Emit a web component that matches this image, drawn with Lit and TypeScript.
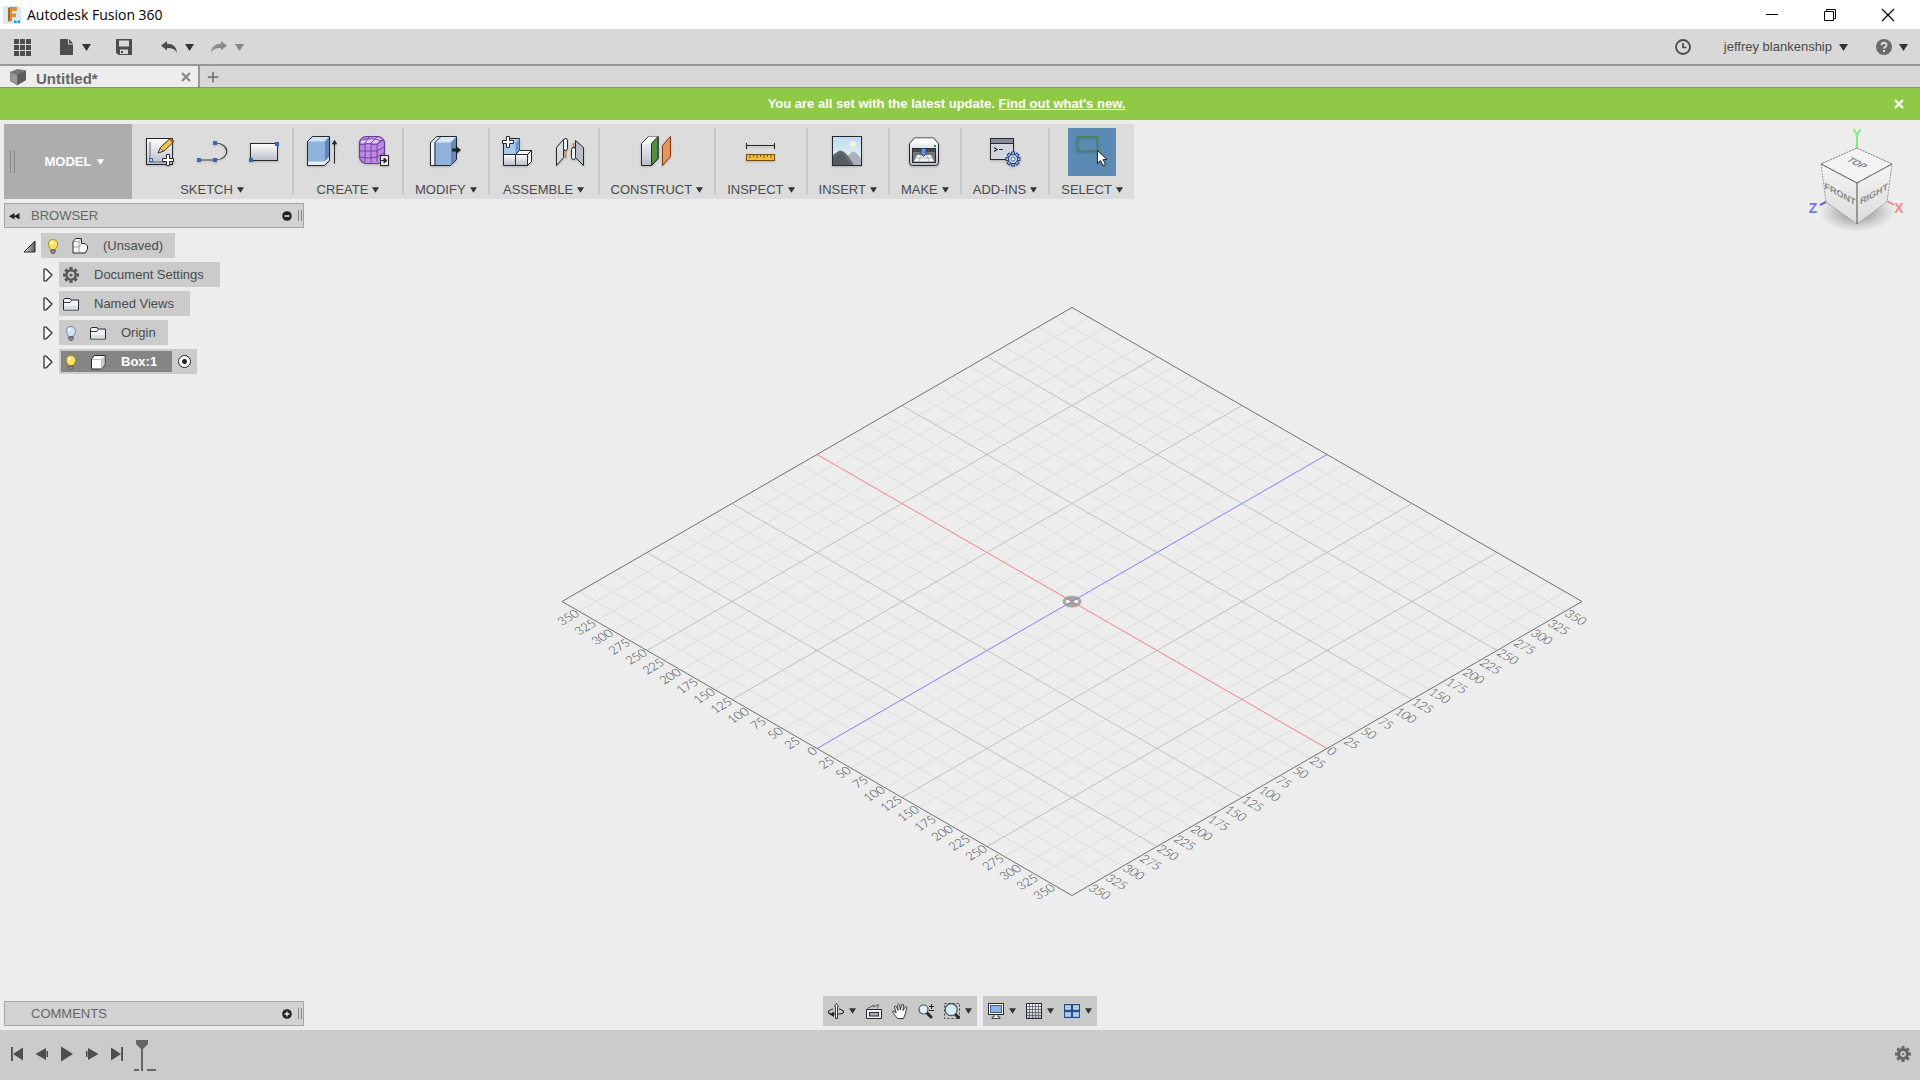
import { LitElement, html, svg, css, nothing } from "lit";
import type { TemplateResult, SVGTemplateResult } from "lit";
import { customElement } from "lit/decorators.js";
import { classMap } from "lit/directives/class-map.js";

const INK = "#26282c";

const gearTeeth = (cx: number, cy: number, r: number, w: number, fill: string, stroke = "none") =>
  [0, 45, 90, 135, 180, 225, 270, 315].map(
    (a) => svg`<rect x=${cx - w / 2} y=${cy - r} width=${w} height=${r / 2} fill=${fill} stroke=${stroke}
      transform="rotate(${a} ${cx} ${cy})"/>`
  );

/* Ribbon icons, drawn on a 48 unit cell */
const ribbonIcons: Record<string, SVGTemplateResult> = {
  createSketch: svg`
    <rect x="10.5" y="10.5" width="26" height="26" fill="url(#silver)" stroke=${INK}/>
    <path d="M14 14V34H34" fill="none" stroke="#666b78"/>
    <rect x="13.5" y="30.5" width="3" height="3" fill="#b9cdea" stroke="#3d63a8"/>
    <path d="M22 25l2.500-5.500L33.500 11l3.500 3.500L28 23z" fill="#f3c545" stroke="#3a2d14"/>
    <path d="M33.500 11l3.500 3.500 1-1.500-3-3z" fill="#b06a48" stroke="#5a3325" stroke-width=".6"/>
    <path d="M24.500 20.500l2.500 2.500-5 2z" fill="#f6e7c8" stroke="#3a2d14" stroke-width=".6"/>
    <path d="M30.500 26.500h3v4h4v3h-4v4h-3v-4h-4v-3h4z" fill="#fff" stroke=${INK}/>`,
  arc: svg`
    <path d="M11 32H28C43 31 42 15 27 15" fill="none" stroke="#3d3f44" stroke-width="1.200"/>
    <g fill="#3f63b5"><rect x="9" y="30" width="4" height="4"/><rect x="25" y="30" width="4" height="4"/><rect x="25" y="13" width="4" height="4"/></g>`,
  rectangle: svg`
    <rect x="10.500" y="15.500" width="27" height="17" fill="url(#silver)" stroke=${INK}/>
    <g fill="#3f63b5"><rect x="35" y="14" width="4" height="4"/><rect x="9" y="30" width="4" height="4"/></g>`,
  extrude: svg`
    <path d="M9.500 13.500l5-5h17v24l-5 5h-17z" fill="#8fb2dc" stroke=${INK} stroke-linejoin="round"/>
    <path d="M10 13.500l5-4.500h16l-4.500 4.500z" fill="#cfe1f5"/>
    <path d="M27 13.500L31 9.500V32l-4 4.500z" fill="#5f87b8"/>
    <path d="M10 33.500h16.500l4.500-4.500V32l-5 5H10z" fill="#e8edf4"/>
    <path d="M36.500 35.500V13M34.500 16l2-3.500 2 3.500z" fill=${INK} stroke=${INK}/>`,
  form: svg`
    <rect x="9.500" y="8.500" width="25" height="27" rx="7" fill="#bd8be6" stroke="#6b3c96" stroke-width="1.200"/>
    <path d="M11 13c5-3 16-4 21-2l-5 4H11z" fill="#e3c9f8"/>
    <path d="M10 17q9-3 16 0l7-5M10 23h17l7-4M10 29q8 2 17 0l7-4M15 35V15l4-6M21 35V15l6-6M27 34V16l6-5M13 12q10-3 18 1" fill="none" stroke="#6b3c96" stroke-width=".9"/>
    <rect x="30.500" y="27.500" width="8" height="10" fill="#e6e6e6" stroke=${INK}/>
    <path d="M31 32.500h4M34 30l3 2.500-3 2.500z" fill=${INK} stroke=${INK}/>`,
  pressPull: svg`
    <path d="M8.500 14.500l6-6h20v23l-6 6h-20z" fill="#8fb2dc" stroke=${INK} stroke-linejoin="round"/>
    <path d="M9 14.500l5.500-5.500h19l-5 5.500z" fill="#d9e8f8"/>
    <path d="M9 14.500h3.500V37H9z" fill="#eef3f8"/>
    <path d="M29 14.500L34 9.500V31l-5 6z" fill="#6289ba"/>
    <path d="M13 37V14.500l6-6" fill="none" stroke=${INK}/>
    <path d="M30 20.500h4V18l5 4-5 4v-2.500h-4z" fill="#222"/>`,
  newComponent: svg`
    <path d="M9.500 14.500l4-4h12v12l-4 4.500h-12z" fill="#a9c8ec" stroke=${INK}/>
    <path d="M21.500 15l4-4v11l-4 4z" fill="#6f98cc"/>
    <path d="M9.500 26.500h12v11h-12zM21.500 26.500h12v11h-12z" fill="url(#silver)" stroke=${INK}/>
    <path d="M21.500 26.500l4-4h12l-4 4zM33.500 26.500l4-4v11l-4 4z" fill="#f6f7f9" stroke=${INK} stroke-linejoin="round"/>
    <path d="M12.500 8.500h3v4h4v3h-4v4h-3v-4h-4v-3h4z" fill="#fff" stroke=${INK}/>`,
  joint: svg`
    <path d="M10.500 19.500l7-8v18l-7 8z" fill="#d7dbe2" stroke=${INK} stroke-linejoin="round"/>
    <rect x="17.500" y="10.500" width="4" height="12" rx="2" fill="#eef0f3" stroke=${INK}/>
    <path d="M19.500 23v7M27.500 15v5" stroke="#e27a2c" stroke-width="1.600"/>
    <path d="M29.500 12.500l8 7v18l-8-8z" fill="#b9bfc9" stroke=${INK} stroke-linejoin="round"/>
    <rect x="25.500" y="19.500" width="4" height="12" rx="2" fill="#eef0f3" stroke=${INK}/>`,
  plane: svg`
    <path d="M8.500 15.500l7-7h9.500v22l-6.500 7h-10z" fill="url(#silver)" stroke=${INK} stroke-linejoin="round"/>
    <path d="M9 15.500l7-7h9l-6.500 7z" fill="#f8fafb"/>
    <path d="M18.500 15.500l6.500-7v22l-6.500 7z" fill="#4f8f3d" stroke=${INK} stroke-linejoin="round"/>
    <path d="M29.500 17.500l8-9v20l-8 9z" fill="#e9935c" stroke="#7c3a16" stroke-linejoin="round"/>`,
  measure: svg`
    <path d="M9.500 15v6M37.500 15v6M9.500 17.500h28" stroke=${INK} fill="none"/>
    <rect x="9.500" y="26.500" width="28" height="6" fill="#f1bf3c" stroke="#7a4d10"/>
    <path d="M13 27v3M16.500 27v2M20 27v3M23.500 27v2M27 27v3M30.500 27v2M34 27v3" stroke="#6b430e" stroke-width=".9"/>`,
  image: svg`
    <rect x="8.500" y="8.500" width="29" height="29" fill="url(#sky)" stroke=${INK}/>
    <circle cx="29" cy="16" r="2.800" fill="#fff6c9"/>
    <path d="M22 29l7-5.500q4 1 8 7V37H24z" fill="#a9b2bd"/>
    <path d="M9 27q5-4 7-4.500 4 0 8 5.500l6 9H9z" fill="#646a74"/>
    <path d="M9 30q6-3 9-6l8 13H9z" fill="#4c515a" opacity=".6"/>`,
  print: svg`
    <path d="M8.500 15.500l5-5.500h19l5 5.500v19q0 3-3 3h-23q-3 0-3-3z" fill="url(#silver)" stroke=${INK} stroke-linejoin="round"/>
    <path d="M9 15.500l5-5h18l5 5z" fill="#fafbfc"/>
    <rect x="33" y="17" width="2" height="2" fill="#2f8b2f"/>
    <rect x="11.500" y="20.500" width="23" height="14" fill="#70757e" stroke=${INK}/>
    <path d="M12 21h22v3H12z" fill="#44484f"/>
    <path d="M16 27h14l3 6.500H13z" fill="#f3f5f8"/>
    <path d="M14.500 30h17M20 27l-2 6.500M26 27l2 6.500" stroke="#a6acb6" stroke-width=".8"/>
    <path d="M20 20.500h5v5l-2.500 3-2.500-3z" fill="#6b95d2" stroke="#27457a"/>`,
  scripts: svg`
    <rect x="9.500" y="10.500" width="23" height="21" fill="#d3d6de" stroke=${INK}/>
    <rect x="10" y="11" width="22" height="4" fill="#888c98"/>
    <path d="M10 15.500h22" stroke=${INK}/>
    <path d="M13 19.500l3 2-3 2M18 21.500h4" fill="none" stroke=${INK} stroke-width="1.200"/>
    ${gearTeeth(32, 31, 7, 3, "#a9c4e8", "#27457a")}
    <circle cx="32" cy="31" r="4.600" fill="#c3d6f0" stroke="#27457a"/>
    <circle cx="32" cy="31" r="2" fill="#fff" stroke="#27457a" stroke-width=".8"/>`,
  select: svg`
    <rect x="9.500" y="9" width="20" height="14" fill="none" stroke="#3f8a4c" stroke-width="1.600"/>
    <path d="M29.500 22.500v13l3-3 2.500 5 2.500-1-2.500-5h4z" fill="#fff" stroke=${INK} stroke-linejoin="round"/>`,
};

interface RibbonGroup {
  label: string;
  tools: { icon: string; name: string; active?: boolean }[];
}

const ribbonGroups: RibbonGroup[] = [
  { label: "SKETCH", tools: [{ icon: "createSketch", name: "Create Sketch" }, { icon: "arc", name: "Line" }, { icon: "rectangle", name: "Rectangle" }] },
  { label: "CREATE", tools: [{ icon: "extrude", name: "Extrude" }, { icon: "form", name: "Create Form" }] },
  { label: "MODIFY", tools: [{ icon: "pressPull", name: "Press Pull" }] },
  { label: "ASSEMBLE", tools: [{ icon: "newComponent", name: "New Component" }, { icon: "joint", name: "Joint" }] },
  { label: "CONSTRUCT", tools: [{ icon: "plane", name: "Offset Plane" }] },
  { label: "INSPECT", tools: [{ icon: "measure", name: "Measure" }] },
  { label: "INSERT", tools: [{ icon: "image", name: "Attached Canvas" }] },
  { label: "MAKE", tools: [{ icon: "print", name: "3D Print" }] },
  { label: "ADD-INS", tools: [{ icon: "scripts", name: "Scripts and Add-Ins" }] },
  { label: "SELECT", tools: [{ icon: "select", name: "Select", active: true }] },
];

/* Small icons on a 16 unit cell */
const bulb = (glass: string, edge: string, base: string) => svg`
  <path d="M8 1.500a4.600 4.600 0 0 1 4.700 4.700c0 2.300-2 3.300-2.200 5.300h-5C5.300 9.500 3.300 8.500 3.300 6.200A4.600 4.600 0 0 1 8 1.500z" fill=${glass} stroke=${edge}/>
  <ellipse cx="6.600" cy="4.600" rx="1.600" ry="1.800" fill="#fff" opacity=".8"/>
  <path d="M5.800 12h4.400v2L9 15.500H7L5.800 14z" fill=${base} stroke="#4c4c50" stroke-width=".8"/>`;

const smallIcons: Record<string, SVGTemplateResult> = {
  bulbOn: bulb("#ffe45c", "#a88a20", "#8c8f96"),
  bulbOff: bulb("#cfe0fa", "#7287ad", "#8c8f96"),
  component: svg`
    <path d="M1 3.500l2.500-3H9.500v5h3.500l2.500 2.500v3.500L13 15H1z" fill="#f7f8fa" stroke=${INK} stroke-linejoin="round"/>
    <path d="M1 9h6V3.500M7 3.500l2.500-3M7 9v6M7 9l2.500-3.500M1 3.500h6" fill="none" stroke="#8a8e96" stroke-width=".8"/>`,
  folder: svg`
    <path d="M.500 14V4l1-1.500h5.500l1 1.500h7.500v10z" fill="#f1f3f6" stroke=${INK} stroke-linejoin="round"/>
    <path d="M1 6.500h6l1.500-2" fill="none" stroke=${INK} stroke-width=".9"/>
    <path d="M1 10h14v3.500H1z" fill="#d9dde4"/>`,
  body: svg`
    <path d="M1.500 5l3-3.500h10.500v9.500l-3.500 4H1.500z" fill="#fbfbfc" stroke=${INK} stroke-linejoin="round"/>
    <path d="M11.500 5l3-3v9l-3 3.500z" fill="#c6cad1"/>
    <path d="M2 5.500h9.500V15" fill="none" stroke="#a8acb4" stroke-width=".7"/>`,
  gear: svg`
    ${gearTeeth(8, 8, 8, 3.2, "#595959")}
    <circle cx="8" cy="8" r="4.600" fill="none" stroke="#595959" stroke-width="2.400"/>
    <circle cx="8" cy="8" r="1.600" fill="#595959"/>`,
  settings: svg`
    ${gearTeeth(8, 8, 8, 3, "#666")}
    <circle cx="8" cy="8" r="4.400" fill="none" stroke="#666" stroke-width="3"/>
    <circle cx="8" cy="8" r="1.200" fill="#777"/>`,
  apps: svg`${[0, 6, 12].map((y) => [0, 6, 12].map((x) => svg`<rect x=${x} y=${y} width="5" height="5" fill="#4d4d4d"/>`))}`,
  file: svg`<path d="M2 0h8v5.500h5V16H2z" fill="#4d4d4d"/><path d="M11 0l4 4.500h-4z" fill="#4d4d4d"/>`,
  save: svg`
    <path d="M0 0h16v16H2.500L0 13.500z" fill="#4d4d4d"/>
    <rect x="3" y="1.500" width="10" height="6" fill="#d8d8d8"/>
    <rect x="4" y="10.500" width="8" height="4.500" fill="#d8d8d8"/><rect x="5" y="12" width="2" height="2" fill="#4d4d4d"/>`,
  undo: svg`<path d="M0 6.500L6 2v2.800c6 0 9.500 2.700 10 9.200-2-4-5-5-10-5v2.500z" fill="#4d4d4d"/>`,
  redo: svg`<path d="M16 6.500L10 2v2.800c-6 0-9.500 2.700-10 9.200 2-4 5-5 10-5v2.500z" fill="#8c8c8c"/>`,
  clock: svg`<circle cx="8" cy="8" r="7" fill="none" stroke="#4a4a4a" stroke-width="1.800"/><path d="M8 4v4.500h3.500" fill="none" stroke="#4a4a4a" stroke-width="1.600"/>`,
  help: svg`<circle cx="8" cy="8" r="8" fill="#6a6a6a"/><path d="M5.500 6.200C5.500 2.800 10.600 3 10.500 6c0 1.700-2.300 1.700-2.400 3.800" fill="none" stroke="#dedede" stroke-width="1.900"/><rect x="7.100" y="11" width="2" height="2" fill="#dedede"/>`,
  tabCube: svg`
    <path d="M0 3L7.500 0 16 1.500V11L7.500 16 0 11.500z" fill="#767676"/>
    <path d="M0 3l7.500 2.500V16L0 11.500z" fill="#989898" stroke="#666" stroke-width=".6"/>
    <path d="M7.500 5.500L16 1.500V11l-8.500 5z" fill="#5c5c5c"/>`,
  orbit: svg`
    <path d="M5 6C-1 7.500-1 10.500 3.500 11M11 6c6 1.500 6 4.500 0 5H5" fill="none" stroke=${INK} stroke-width="1.200"/>
    <path d="M8.500 .5l2 3H9.500V15.500h-2V3.500h-1z" fill="#fff" stroke=${INK} stroke-width=".9"/>
    <path d="M6 8.500v5.500l-4.500-2.700z" fill=${INK}/>`,
  lookAt: svg`
    <path d="M.500 6.500h15v9H.500z" fill="#eef0f3" stroke=${INK}/>
    <rect x="3.500" y="9.500" width="9" height="3.500" fill="#a9acb6" stroke=${INK}/>
    <path d="M1.500 5.500L8 2l-.500 2 5-2.500-1 4" fill="none" stroke="#565a63"/>`,
  pan: svg`
    <path d="M5.500 15.500Q2.500 12 .700 9q0-1.500 1.500-1l2 2L2.500 4q.3-1.500 1.700-.7L6 7.500 5.700 1.700q.9-1.600 1.900 0L8.300 7 9.800 1.600q1.200-1.100 1.800.3L11 7.600l2.300-3.800q1.400-.7 1.500.6Q14 10 11.500 15.500z" fill="#fff" stroke=${INK} stroke-width=".9" stroke-linejoin="round"/>`,
  zoom: svg`
    <path d="M8.500 9.500l4.500 4.500" stroke=${INK} stroke-width="3" stroke-linecap="round"/>
    <circle cx="5.500" cy="6.500" r="4.500" fill="#dff0f5" stroke="#4c525c" stroke-width="1.200"/>
    <path d="M11 3.500h5M13.500 1v5M11 7.500h5" stroke=${INK}/>`,
  fit: svg`
    <rect x=".5" y=".5" width="15" height="15" fill="none" stroke="#3c3f45" stroke-dasharray="2 2"/>
    <path d="M11 11l3.500 3.500" stroke=${INK} stroke-width="3" stroke-linecap="round"/>
    <circle cx="7.200" cy="6.700" r="6" fill="#d5ecf0" stroke="#4c525c" stroke-width="1.200"/>`,
  display: svg`
    <path d="M6 11h4v3h2v1.500H4V14h2z" fill="#e8eaee" stroke=${INK} stroke-width=".8"/>
    <rect x=".5" y=".5" width="15" height="11" fill="#fff" stroke=${INK}/>
    <rect x="2.500" y="2.500" width="11" height="7" fill="#8db3e4" stroke="#3c5f98"/>`,
  gridSet: svg`
    <rect x=".5" y=".5" width="15" height="15" fill="url(#silver)" stroke=${INK}/>
    <path d="M3.500 1v14M6.500 1v14M9.500 1v14M12.500 1v14M1 3.500h14M1 6.500h14M1 9.500h14M1 12.500h14" stroke="#565b66" stroke-width=".8"/>`,
  views: svg`
    <rect x="0" y="2" width="16" height="12" fill="#fff"/>
    <g fill="#8db3e4" stroke="#2c4c86"><rect x=".5" y="1.500" width="7" height="6"/><rect x="8.500" y="1.500" width="7" height="6"/><rect x=".5" y="8.500" width="7" height="6"/><rect x="8.500" y="8.500" width="7" height="6"/></g>
    <g fill="none" stroke="#cfe0f6" stroke-width=".8"><rect x="2" y="3.500" width="4" height="2"/><rect x="10" y="3.500" width="4" height="2"/><rect x="2" y="10.500" width="4" height="2"/><rect x="10" y="10.500" width="4" height="2"/></g>`,
  first: svg`<path d="M2 1h1.800v14H2zM14 1.500v13L4 8z" fill="#4d4d4d"/>`,
  prev: svg`<path d="M12 2v12L1.500 8zM12.500 5H14v6h-1.500z" fill="#4d4d4d"/>`,
  play: svg`<path d="M2 .500v15L14 8z" fill="#4d4d4d"/>`,
  next: svg`<path d="M4 2v12l10.500-6zM2 5h1.500v6H2z" fill="#4d4d4d"/>`,
  last: svg`<path d="M12.200 1H14v14h-1.800zM2 1.500v13L12 8z" fill="#4d4d4d"/>`,
  rewind: svg`<path d="M7.500 5v6.500L2 8.200zM12.500 5v6.500L7 8.200z" fill="#222"/>`,
  collapse: svg`<circle cx="8" cy="8" r="4.800" fill="#222"/><path d="M5.500 8h5" stroke="#eee" stroke-width="1.500"/>`,
  expand: svg`<circle cx="8" cy="8" r="4.800" fill="#222"/><path d="M5.500 8h5M8 5.500v5" stroke="#eee" stroke-width="1.300"/>`,
  cross: svg`<path d="M3.500 3.500l9 9M12.500 3.500l-9 9" stroke="currentColor" stroke-width="2.600"/>`,
  plus: svg`<path d="M8 2v12M2 8h12" stroke="#777" stroke-width="2"/>`,
  open: svg`<path d="M14 3v11H3z" fill="url(#tri)" stroke=${INK}/>`,
  closed: svg`<path d="M4 2h2l6 6-6 6H4z" fill="#f6f6f6" stroke=${INK} stroke-width="1.200" stroke-linejoin="round"/>`,
};

/* Gradients shared by every icon in this shadow root */
const sharedDefs = svg`<defs>
  <linearGradient id="silver" x1="0" y1="0" x2="0" y2="1"><stop offset="0" stop-color="#fdfdfe"/><stop offset="1" stop-color="#b9bdc7"/></linearGradient>
  <linearGradient id="sky" x1="0" y1="0" x2="0" y2="1"><stop offset="0" stop-color="#bcdaf0"/><stop offset="1" stop-color="#f3f7f5"/></linearGradient>
  <linearGradient id="tri" x1="0" y1="0" x2="1" y2="0"><stop offset="0" stop-color="#eee"/><stop offset="1" stop-color="#555"/></linearGradient>
</defs>`;

const icon = (name: string, size = "s16") =>
  html`<svg class=${size} viewBox=${name === "apps" ? "0 0 17 17" : "0 0 16 16"} aria-hidden="true">${smallIcons[name]}</svg>`;

const caret = (tone = "") => html`<svg class="caret ${tone}" viewBox="0 0 9 7" aria-hidden="true"><path d="M0 0h9L4.500 7z" fill="currentColor"/></svg>`;

/* Ground plane geometry: 30 divisions of 25 mm per side */
const CX = 1072;
const CY = 481.5;
const UX = 17;
const UY = 9.8;
const HALF = 15;
const project = (x: number, z: number): [number, number] => [CX + (x - z) * UX, CY + (x + z) * UY];

interface TreeRow {
  label: string;
  icons: string[];
  root?: boolean;
  selected?: boolean;
}

const treeRows: TreeRow[] = [
  { label: "(Unsaved)", icons: ["bulbOn", "component"], root: true },
  { label: "Document Settings", icons: ["gear"] },
  { label: "Named Views", icons: ["folder"] },
  { label: "Origin", icons: ["bulbOff", "folder"] },
  { label: "Box:1", icons: ["bulbOn", "body"], selected: true },
];

@customElement("app-root")
export class AppRoot extends LitElement {
  static styles = css`
    :host {
      display: flex;
      flex-direction: column;
      min-height: 100vh;
      font-family: "Liberation Sans", Arial, sans-serif;
      font-size: 13px;
      line-height: 16px;
      color: #4a4a4a;
      background: #ededed;
    }
    * { box-sizing: border-box; }
    button {
      display: flex;
      align-items: center;
      justify-content: center;
      margin: 0;
      padding: 0;
      border: 0;
      background: none;
      font: inherit;
      color: inherit;
    }
    svg { display: block; flex: none; }
    .s16 { width: 16px; height: 16px; }
    .s17 { width: 17px; height: 17px; }
    .s14 { width: 14px; height: 14px; }
    .caret { width: 9px; height: 7px; color: #333; }
    .caret.faded { color: #858585; }
    .caret.light { color: #fff; }

    .titlebar {
      display: flex;
      align-items: center;
      height: 29px;
      padding: 0 3px;
      gap: 6px;
      background: #fff;
      color: #000;
    }
    .logo { width: 18px; height: 18px; }
    .title {
      flex: 1;
      margin: 0;
      font: 400 14px/20px "Open Sans", "Noto Sans", sans-serif;
    }
    .window-controls { display: flex; }
    .window-controls button { width: 58px; height: 29px; }

    .quickbar {
      display: flex;
      align-items: center;
      justify-content: space-between;
      height: 37px;
      padding: 1px 12px 0 14px;
      border-bottom: 2px solid #989898;
      background: #d8d8d8;
    }
    .cluster { display: flex; align-items: center; }
    .quick-left { gap: 17px; }
    .quick-left button { gap: 8px; }
    .quick-left .apps { margin-right: 10px; }
    .quick-left .save { margin: 0 12px 0 8px; }
    .quick-right { gap: 28px; }
    .quick-right .clock { margin-right: 5px; }
    .quick-right button { gap: 7px; }

    .tabs {
      display: flex;
      height: 22px;
      border-bottom: 1px solid #8d8d8d;
      background: #d8d8d8;
    }
    .tab {
      display: flex;
      align-items: center;
      width: 200px;
      padding: 0 5px 0 10px;
      border-right: 2px solid #989898;
      background: #ededed;
      color: #666;
    }
    .tab-name {
      flex: 1;
      padding: 4px 0 0 10px;
      font-size: 15px;
      font-weight: 700;
      text-align: left;
    }
    .tab .close { color: #888; }
    .add { width: 26px; }

    .banner {
      display: flex;
      align-items: center;
      height: 32px;
      background: #8fc945;
      color: #fff;
      font-weight: 700;
    }
    .banner p { flex: 1; margin: 0; padding-left: 16px; text-align: center; }
    .banner a { color: inherit; }
    .banner button { width: 43px; height: 32px; }

    .workspace {
      position: relative;
      display: flex;
      flex: 1;
      flex-direction: column;
      padding: 4px;
      overflow: hidden;
    }
    .ground {
      position: absolute;
      inset: 0;
      width: 100%;
      height: 100%;
    }
    .tick {
      font: 300 12px Lato, "Liberation Sans", sans-serif;
      fill: #444;
    }
    .cube {
      position: absolute;
      top: 0;
      right: 0;
      width: 120px;
      height: 130px;
    }
    .face { font: 700 9px "Liberation Sans Narrow", "Liberation Sans", sans-serif; fill: #85878b; text-anchor: middle; }
    .axis { font: 700 14px "Liberation Sans Narrow", "Liberation Sans", sans-serif; text-anchor: middle; }

    .ribbon {
      position: relative;
      display: flex;
      align-self: flex-start;
      height: 75px;
      background: #dcdcdc;
    }
    .mode {
      position: relative;
      width: 128px;
      gap: 6px;
      padding-left: 6px;
      background: #adadad;
      color: #fff;
      font-weight: 700;
    }
    .mode .caret { width: 7px; height: 6px; }
    .grip {
      width: 5px;
      height: 23px;
      margin-left: -28px;
      margin-right: 24px;
      border: solid #888;
      border-width: 0 1px;
    }
    .group {
      display: flex;
      flex-direction: column;
      align-items: center;
      padding: 4px 4px 0;
    }
    .divider {
      width: 2px;
      height: 66px;
      margin-top: 4px;
      background: #c6c6c6;
    }
    .tools { display: flex; flex: none; gap: 4px; }
    .tool { width: 48px; height: 48px; }
    .tool svg { width: 48px; height: 48px; filter: drop-shadow(0 1px 1px #00000033); }
    .tool.active { background: #5b8bb5; }
    .menu { height: 23px; padding: 5px 7px 0; gap: 4px; }
    .menu .caret { width: 7px; height: 6px; }

    .panel-head {
      position: relative;
      display: flex;
      align-items: center;
      width: 300px;
      height: 25px;
      padding: 0 1px 0 2px;
      border: 1px solid #a6a6a6;
      background: #d2d2d2;
      color: #666;
    }
    .panel-title { flex: 1; margin: 0; padding-left: 8px; font-size: 13px; font-weight: 400; }
    .panel-title.bare { padding-left: 24px; }
    .handle { width: 4px; height: 11px; margin-left: 3px; border: solid #888; border-width: 0 1px; }
    .browser { position: relative; align-self: flex-start; margin-top: 4px; }
    .tree {
      display: flex;
      flex-direction: column;
      gap: 4px;
      margin: 0;
      padding: 5px 0 0 36px;
      list-style: none;
    }
    .row { display: flex; align-items: center; height: 25px; gap: 3px; }
    .row.root { margin-left: -19px; gap: 4px; }
    .chip {
      display: flex;
      align-items: center;
      height: 25px;
      gap: 11px;
      padding: 0 12px 0 4px;
      background: #cbcbcb;
    }
    .chip.single { padding-right: 16px; }
    .name { padding-left: 4px; }
    .chip.picked { gap: 6px; padding: 0 6px 0 2px; }
    .selected {
      display: flex;
      align-items: center;
      height: 21px;
      gap: 11px;
      padding: 0 15px 0 2px;
      background: #858585;
      color: #fff;
      font-weight: 700;
    }
    .radio {
      width: 13px;
      height: 13px;
      margin: 0;
      border: 1px solid #222;
      border-radius: 50%;
      appearance: none;
      background: radial-gradient(circle, #222 0 2px, #fff 3px);
    }

    .bottom {
      position: relative;
      display: grid;
      grid-template-columns: 1fr auto 1fr;
      align-items: end;
      margin-top: auto;
    }
    .navs { display: flex; gap: 6px; }
    .nav { display: flex; align-items: center; height: 30px; gap: 10px; padding: 0 5px; background: #c9c9c9; }
    .nav button { gap: 5px; }
    .nav .caret { width: 7px; height: 6px; }

    .timeline {
      display: flex;
      align-items: center;
      height: 50px;
      padding: 0 9px 2px 4px;
      background: #cbcbcb;
    }
    .play { width: 25px; height: 25px; }
    .marker { width: 24px; height: 34px; margin: 4px 0 0 4px; }
    .spacer { flex: 1; }
  `;

  private renderGround(): TemplateResult {
    const lines: SVGTemplateResult[] = [];
    for (const major of [false, true]) {
      for (let i = -HALF + 1; i < HALF; i++) {
        if (i === 0 || (i % 5 === 0) !== major) continue;
        const [x1, y1] = project(i, -HALF);
        const [x2, y2] = project(i, HALF);
        const [x3, y3] = project(-HALF, i);
        const [x4, y4] = project(HALF, i);
        lines.push(svg`<path d="M${x1} ${y1}L${x2} ${y2}M${x3} ${y3}L${x4} ${y4}" stroke=${major ? "#bfbfbf" : "#dddddd"}/>`);
      }
    }
    const ticks: SVGTemplateResult[] = [];
    for (let i = -HALF + 1; i < HALF; i++) {
      const [lx, ly] = project(i, HALF);
      const [rx, ry] = project(HALF, i);
      const value = Math.abs(i) * 25;
      ticks.push(svg`
        <text class="tick" text-anchor="end" x="-2" y="4" transform="translate(${lx} ${ly}) rotate(-30) skewX(15)">${value}</text>
        <text class="tick" x="2" y="4" transform="translate(${rx} ${ry}) rotate(30) skewX(-15)">${value}</text>`);
    }
    const pt = (x: number, z: number) => project(x, z).join(" ");
    return html`<svg class="ground" viewBox="0 0 1920 910" aria-label="Ground plane">
      ${sharedDefs}
      <g fill="none">
        ${lines}
        <path d="M${pt(-HALF, 0)}L${pt(HALF, 0)}" stroke="#f58080"/>
        <path d="M${pt(0, -HALF)}L${pt(0, HALF)}" stroke="#8080f5"/>
        <path d="M${pt(-HALF, -HALF)}L${pt(HALF, -HALF)}L${pt(HALF, HALF)}L${pt(-HALF, HALF)}Z" stroke="#707070"/>
      </g>
      ${ticks}
      <g>
        <ellipse cx=${CX} cy=${CY} rx="8.500" ry="5" fill="#a5a5a5" stroke="#aaa" stroke-width="2"/>
        <ellipse cx=${CX - 4} cy=${CY} rx="2.400" ry="2" fill="#f4f4f4"/>
        <ellipse cx=${CX + 4} cy=${CY} rx="2.400" ry="2" fill="#f4f4f4"/>
        <path d="M${CX - 6} ${CY - 3.5}L${CX + 6} ${CY + 3.5}" stroke="#e07070"/>
        <path d="M${CX - 6} ${CY + 3.5}L${CX + 6} ${CY - 3.5}" stroke="#7878ee"/>
      </g>
    </svg>`;
  }

  private renderCube(): TemplateResult {
    return html`<svg class="cube" viewBox="0 0 120 130" aria-label="View cube">
      <defs>
        <linearGradient id="faceL" x1="0" y1="0" x2="0" y2="1"><stop offset="0" stop-color="#f4f4f4"/><stop offset="1" stop-color="#dcdcdc"/></linearGradient>
        <radialGradient id="shade"><stop offset="0" stop-color="#555" stop-opacity=".75"/><stop offset="1" stop-color="#888" stop-opacity="0"/></radialGradient>
      </defs>
      <ellipse cx="57" cy="92" rx="38" ry="20" fill="url(#shade)"/>
      <path d="M57 18v10" stroke="#66e866" stroke-width="1.600"/>
      <path d="M26 82l-6 3" stroke="#6464dc" stroke-width="2"/>
      <path d="M87 81l7 4" stroke="#f08080" stroke-width="2"/>
      <path d="M57 28L92 44 57 63 21 44z" fill="#f3f3f3" stroke="#777" stroke-dasharray="2 1"/>
      <path d="M21 44L57 63V104L26 82z" fill="url(#faceL)" stroke="#999" stroke-dasharray="2 1"/>
      <path d="M92 44L57 63V104L87 82z" fill="url(#faceL)" stroke="#999" stroke-dasharray="2 1"/>
      <path d="M21 44L57 63 92 44M57 63V104" fill="none" stroke="#707070"/>
      <text class="face" x="0" y="3" transform="translate(57 43) rotate(28) skewX(-32)">TOP</text>
      <text class="face" x="0" y="3" transform="translate(40 74) skewY(29)">FRONT</text>
      <text class="face" x="0" y="3" transform="translate(74 74) skewY(-29)">RIGHT</text>
      <text class="axis" x="57" y="19" fill="#80ec80">Y</text>
      <text class="axis" x="13" y="93" fill="#7878e4">Z</text>
      <text class="axis" x="99" y="93" fill="#f58888">X</text>
    </svg>`;
  }

  private renderRow(row: TreeRow): TemplateResult {
    const content = html`${row.icons.map((n) => icon(n))}<span class="name">${row.label}</span>`;
    return html`<li class=${classMap({ row: true, root: !!row.root })}>
      <button aria-label="Expand ${row.label}">${icon(row.root ? "open" : "closed")}</button>
      ${row.selected
        ? html`<div class="chip picked"><div class="selected">${content}</div>
            <input class="radio" type="radio" name="active" checked aria-label="Activate ${row.label}" /></div>`
        : html`<div class=${classMap({ chip: true, single: row.icons.length === 1 })}>${content}</div>`}
    </li>`;
  }

  render() {
    const navButton = (name: string, label: string, menu = false) =>
      html`<button aria-label=${label}>${icon(name)}${menu ? caret() : nothing}</button>`;
    return html`
      <header class="titlebar">
        <svg class="logo" viewBox="0 0 18 18" aria-hidden="true">
          <rect width="18" height="18" fill="#d3ecf6"/>
          <path d="M5 2.500l2-1.500h7v4H9v2.500h4V11H9v4.500H5z" fill="#e08a35"/>
          <path d="M5 2.500l2-1.500v13l-2 1.500z" fill="#b5601d"/>
          <path d="M11 14.500h2.500V17H11zM14.500 14.500H17V17h-2.500z" fill="#1d9ad8"/>
        </svg>
        <h1 class="title">Autodesk Fusion 360</h1>
        <div class="window-controls">
          <button aria-label="Minimize"><svg class="s14" viewBox="0 0 14 14"><path d="M1 6.500h12" stroke="#000"/></svg></button>
          <button aria-label="Restore"><svg class="s14" viewBox="0 0 14 14"><path d="M1.500 3.500h9v9h-9zM3.500 3.500v-2h9v9h-2" fill="none" stroke="#000"/></svg></button>
          <button aria-label="Close"><svg class="s14" viewBox="0 0 14 14"><path d="M1 1l12 12M13 1L1 13" stroke="#000" stroke-width="1.200"/></svg></button>
        </div>
      </header>

      <div class="quickbar">
        <div class="cluster quick-left">
          <button class="apps" aria-label="Data panel">${icon("apps", "s17")}</button>
          <button aria-label="File">${icon("file")}${caret()}</button>
          <button class="save" aria-label="Save">${icon("save")}</button>
          <button aria-label="Undo">${icon("undo")}${caret()}</button>
          <button aria-label="Redo">${icon("redo")}${caret("faded")}</button>
        </div>
        <div class="cluster quick-right">
          <button class="clock" aria-label="Job status">${icon("clock")}</button>
          <button>jeffrey blankenship ${caret()}</button>
          <button aria-label="Help">${icon("help")}${caret()}</button>
        </div>
      </div>

      <div class="tabs">
        <div class="tab">${icon("tabCube")}<span class="tab-name">Untitled*</span>
          <button class="close" aria-label="Close tab">${icon("cross", "s14")}</button></div>
        <button class="add" aria-label="New tab">${icon("plus", "s14")}</button>
      </div>

      <div class="banner">
        <p>You are all set with the latest update. <a href="#whats-new">Find out what's new.</a></p>
        <button aria-label="Dismiss">${icon("cross", "s14")}</button>
      </div>

      <main class="workspace">
        ${this.renderGround()} ${this.renderCube()}
        <div class="ribbon">
          <button class="mode"><span class="grip"></span>MODEL ${caret("light")}</button>
          ${ribbonGroups.map(
            (g, i) => html`${i ? html`<span class="divider"></span>` : nothing}
              <div class="group">
                <div class="tools">
                  ${g.tools.map(
                    (t) => html`<button class=${classMap({ tool: true, active: !!t.active })} aria-label=${t.name}>
                      <svg viewBox="0 0 48 48" aria-hidden="true">${ribbonIcons[t.icon]}</svg>
                    </button>`
                  )}
                </div>
                <button class="menu">${g.label}${caret()}</button>
              </div>`
          )}
        </div>

        <section class="browser">
          <div class="panel-head">
            <button aria-label="Collapse browser">${icon("rewind")}</button>
            <h2 class="panel-title">BROWSER</h2>
            <button aria-label="Minimize browser">${icon("collapse")}</button><span class="handle"></span>
          </div>
          <ul class="tree">${treeRows.map((r) => this.renderRow(r))}</ul>
        </section>

        <div class="bottom">
          <div class="panel-head">
            <h2 class="panel-title bare">COMMENTS</h2>
            <button aria-label="Expand comments">${icon("expand")}</button><span class="handle"></span>
          </div>
          <div class="navs">
            <div class="nav">
              ${navButton("orbit", "Orbit", true)} ${navButton("lookAt", "Look at")} ${navButton("pan", "Pan")}
              ${navButton("zoom", "Zoom")} ${navButton("fit", "Fit", true)}
            </div>
            <div class="nav">
              ${navButton("display", "Display settings", true)} ${navButton("gridSet", "Grid and snaps", true)}
              ${navButton("views", "Viewports", true)}
            </div>
          </div>
        </div>
      </main>

      <footer class="timeline">
        ${[["first", "To beginning"], ["prev", "Step back"], ["play", "Play"], ["next", "Step forward"], ["last", "To end"]].map(
          ([n, label]) => html`<button class="play" aria-label=${label}>${icon(n)}</button>`
        )}
        <svg class="marker" viewBox="0 0 24 34" aria-hidden="true">
          <path d="M3 1h12v4l-5 5v22H8V10L3 5z" fill="#666"/><path d="M1 31h5M14 31h9" stroke="#666" stroke-width="2"/>
        </svg>
        <span class="spacer"></span>
        <button aria-label="Timeline settings">${icon("settings")}</button>
      </footer>
    `;
  }
}
